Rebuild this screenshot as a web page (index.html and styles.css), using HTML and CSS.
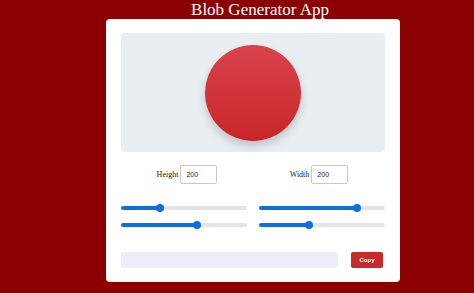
FILE: index.html
```html
<!DOCTYPE html>
<html>
<head>
<meta charset="utf-8">
<link rel="stylesheet" href="styles.css">
</head>
<body>
<div class="app">
  <h1 class="title">Blob Generator App</h1>
  <div class="card">
    <div class="preview">
      <div class="blob"></div>
    </div>
    <div class="dims">
      <div class="dim"><label class="dim-label">Height</label><input class="dim-input" type="text" value="200"></div>
      <div class="dim"><label class="dim-label">Width</label><input class="dim-input" type="text" value="200"></div>
    </div>
    <div class="sliders">
      <div class="slider"><div class="fill" style="width:31%"></div><div class="thumb" style="left:31%"></div></div>
      <div class="slider"><div class="fill" style="width:78%"></div><div class="thumb" style="left:78%"></div></div>
      <div class="slider"><div class="fill" style="width:60%"></div><div class="thumb" style="left:60%"></div></div>
      <div class="slider"><div class="fill" style="width:40%"></div><div class="thumb" style="left:40%"></div></div>
    </div>
    <div class="output">
      <div class="code"></div>
      <button class="copy">Copy</button>
    </div>
  </div>
</div>
</body>
</html>
```

FILE: styles.css
```css
html, body {
  margin: 0;
  padding: 0;
  background: #8b0000;
  height: 100%;
}
.app {
  width: 294px;
  margin-left: 106px;
}
.title {
  margin: 0;
  padding-left: 14px;
  height: 19px;
  line-height: 20px;
  font-family: "Liberation Serif", serif;
  font-weight: normal;
  font-size: 17px;
  color: #fff;
  text-align: center;
  white-space: nowrap;
}
.card {
  background: #fff;
  border-radius: 4px;
  padding: 14px 15px 14px 15px;
  height: 263px;
  box-sizing: border-box;
  display: flex;
  flex-direction: column;
}
.preview {
  height: 119px;
  background: #e9eef3;
  border-radius: 4px;
  display: flex;
  align-items: center;
  justify-content: center;
}
.blob {
  width: 96px;
  height: 96px;
  border-radius: 50%;
  background: linear-gradient(180deg, #d8444a 0%, #c8252a 100%);
  box-shadow: 0 5px 10px rgba(0, 0, 0, 0.18);
}
.dims {
  display: grid;
  grid-template-columns: 1fr 1fr;
  margin-top: 13px;
  height: 19px;
}
.dim {
  display: flex;
  align-items: center;
  justify-content: center;
  gap: 2px;
}
.dim-label {
  font-family: "Liberation Serif", serif;
  font-size: 8px;
  color: #222;
}
.dim-input {
  width: 37px;
  height: 19px;
  box-sizing: border-box;
  border: 1px solid #c8c8c8;
  border-radius: 2px;
  padding: 0 5px;
  font-family: "Liberation Sans", sans-serif;
  font-size: 7px;
  color: #222;
  margin: 0;
}
.sliders {
  display: grid;
  grid-template-columns: 126px 126px;
  column-gap: 12px;
  row-gap: 13px;
  margin-top: 22px;
}
.slider {
  position: relative;
  height: 4px;
  background: #e4e4e4;
  border-radius: 2px;
}
.fill {
  height: 100%;
  background: #0f6fdf;
  border-radius: 2px;
}
.thumb {
  position: absolute;
  top: 50%;
  width: 8px;
  height: 8px;
  border-radius: 50%;
  background: #0f6fdf;
  transform: translate(-50%, -50%);
}
.output {
  margin-top: auto;
  display: flex;
  align-items: center;
  height: 16px;
}
.code {
  width: 217px;
  height: 16px;
  background: #ededf8;
  border-radius: 3px;
}
.copy {
  margin-left: 13px;
  width: 32px;
  height: 16px;
  padding: 0;
  border: none;
  border-radius: 2px;
  background: #c62a2d;
  color: #fff;
  font-family: "Liberation Sans", sans-serif;
  font-size: 6px;
  font-weight: bold;
}
```
